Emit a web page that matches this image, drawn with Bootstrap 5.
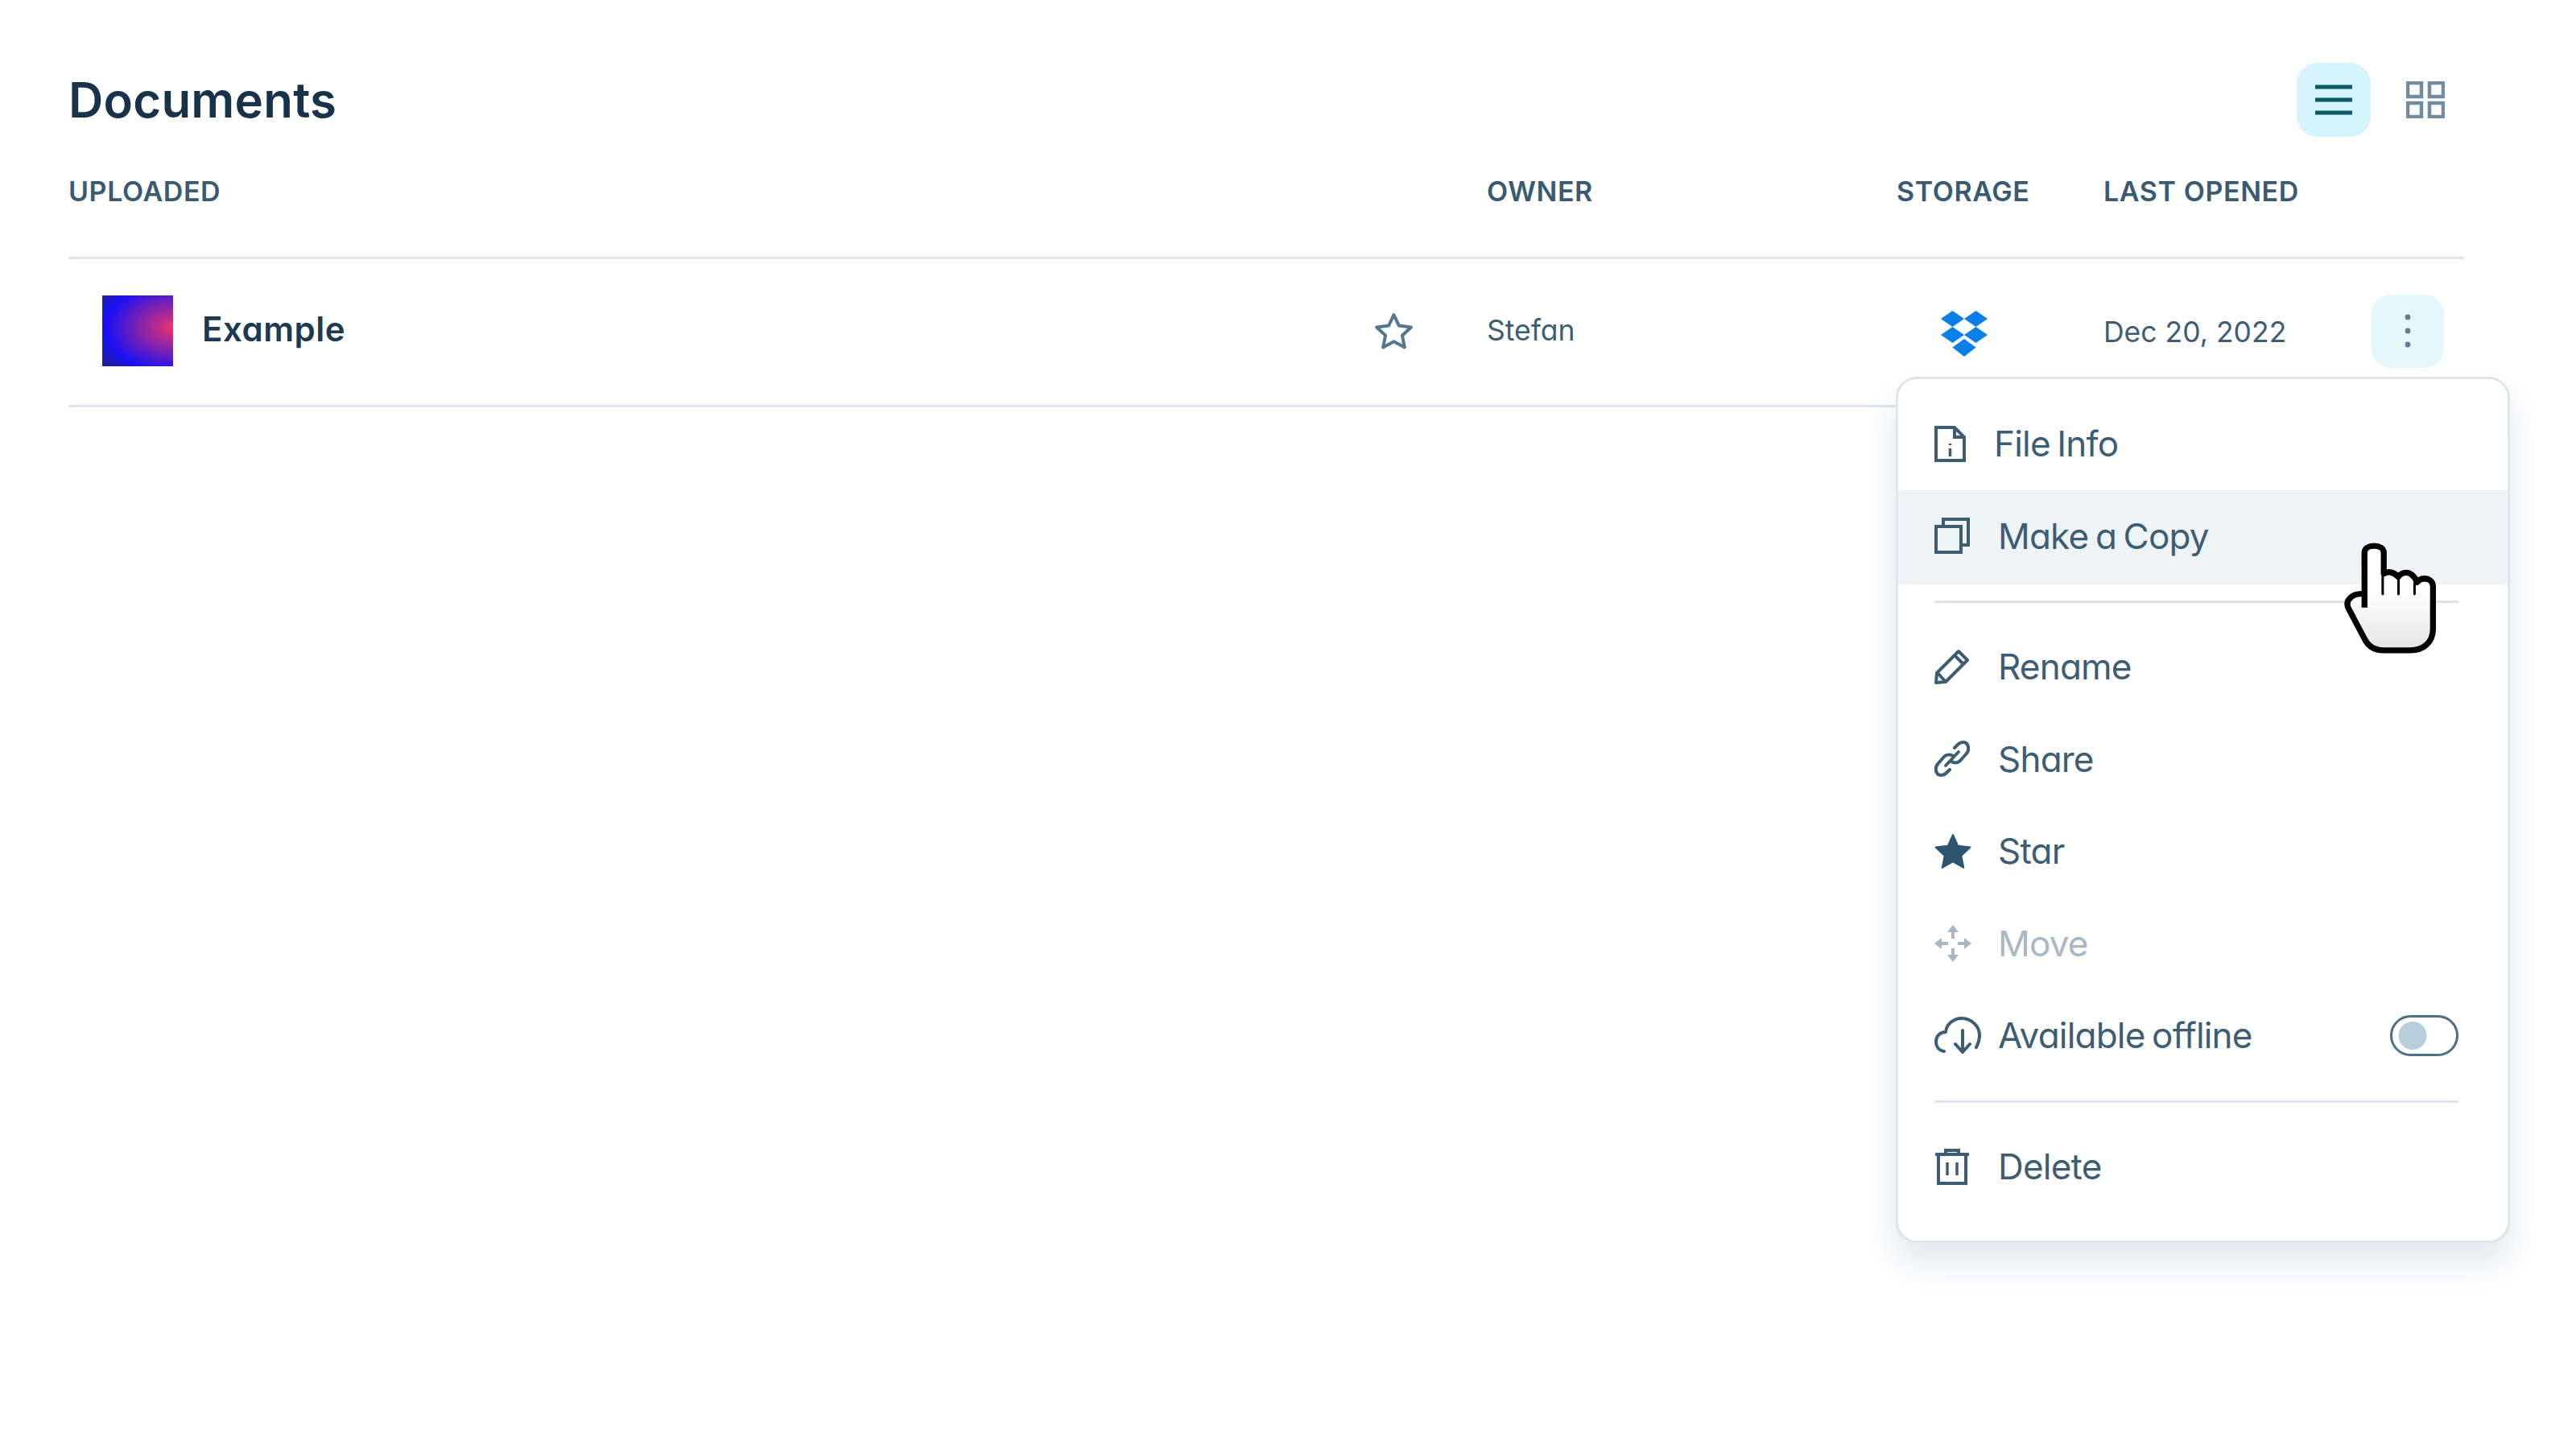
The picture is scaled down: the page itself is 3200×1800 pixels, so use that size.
<!doctype html>
<html lang="en">
<head>
<meta charset="utf-8">
<title>Documents</title>
<link href="https://cdn.jsdelivr.net/npm/bootstrap@5.3.0/dist/css/bootstrap.min.css" rel="stylesheet">
<style>
body{background:#fff;font-family:"Inter","Lato","Noto Sans",sans-serif;font-feature-settings:"cv11" 1;color:#35556b}
.doc-page{padding:78px 139px 0 85px;min-height:1800px}
.doc-title{font-size:60px;font-weight:600;color:#183349;margin:0;letter-spacing:.2px}
.view-gap{gap:22px;margin-right:2px}
.view-btn{width:92px;height:92px;border:0;border-radius:26px;background:transparent;padding:0}
.view-btn.is-on{background:#d4f3fb}
.col-grid{display:grid;grid-template-columns:1762px 509px 257px 333px 115px;align-items:center}
.head-row{height:152px;border-bottom:3px solid #dde6ee;font-size:34px;font-weight:600;color:#3a5a72;letter-spacing:.6px}
.head-row>div{padding-bottom:14px}
.body-row{height:184px;padding-bottom:3px;border-bottom:3px solid #dde6ee;position:relative;font-size:35.5px;color:#3e5d73}
.name-cell{padding:0 91px 0 42px}
.thumb{width:88px;height:88px;background:radial-gradient(ellipse 105% 70% at 100% 45%,#f73365 0,#c02c88 18%,#8a24a8 42%,#5a1cc8 62%,#1a10f5 90%,#1c2588 122%)}
.doc-name{font-size:42px;font-weight:600;color:#1d3a50;margin-left:36px;letter-spacing:.5px;padding-bottom:5px}
.date-cell{padding-top:3px}
.storage-logo{display:block;margin:6px 0 0 55px}
.more-btn{width:90px;height:91px;border:0;border-radius:24px;background:#e6f7fc;padding:0}
.file-menu{position:absolute;top:146px;right:-57px;left:auto;width:763px;margin:0;padding:23px 0 35px;border:3px solid #dde6ee;border-radius:26px;box-shadow:0 24px 44px rgba(60,100,130,.16);font-size:44px;color:#3e5d73;letter-spacing:-.8px;word-spacing:-3px;z-index:5}
.file-menu .dropdown-item{height:114.5px;padding:0 45px;display:flex;align-items:center;color:#3e5d73}
.file-menu .dropdown-item.is-hover{height:117px;padding-bottom:2.5px;background:#eef3f6}
.file-menu .dropdown-item.is-off{color:#a9b8c2}
.file-menu .dropdown-divider{margin:23px 61px 22px 45px;border-top:3px solid #dde6ee;opacity:1}
.file-menu .dropdown-item.is-hover + .dropdown-divider{margin-top:20.5px}
.ico-slot{width:79px;flex:none;display:flex;align-items:center}
.ico-slot.tight{width:74px}
.file-menu .form-check-input{width:85px;height:51px;margin:0;float:none;border:3px solid #4f6f84;background-color:#fff;background-image:radial-gradient(circle at 25px center,#b8cedb 17px,transparent 18px);background-position:0 0;background-size:auto;box-shadow:none}
.file-menu .form-switch{padding:0;margin:0 16px 0 auto;min-height:0;display:flex}
.hand{position:absolute;left:553px;top:202px;width:117px;height:140px;pointer-events:none}
</style>
</head>
<body>
<main class="doc-page">
  <header class="d-flex align-items-center justify-content-between">
    <h1 class="doc-title">Documents</h1>
    <div class="d-flex view-gap">
      <button class="view-btn is-on d-flex align-items-center justify-content-center" aria-label="List view">
        <svg width="46" height="38" viewBox="0 0 46 38"><path d="M0 3h46M0 19h46M0 35h46" stroke="#0d5868" stroke-width="5"/></svg>
      </button>
      <button class="view-btn d-flex align-items-center justify-content-center" aria-label="Grid view">
        <svg width="48" height="46" viewBox="0 0 48 46" fill="none" stroke="#6f8ca0" stroke-width="4.500"><rect x="2" y="2" width="17" height="17"/><rect x="29" y="2" width="17" height="17"/><rect x="2" y="27" width="17" height="17"/><rect x="29" y="27" width="17" height="17"/></svg>
      </button>
    </div>
  </header>
  <div class="col-grid head-row">
    <div>UPLOADED</div><div>OWNER</div><div>STORAGE</div><div>LAST OPENED</div><div></div>
  </div>
  <div class="col-grid body-row">
    <div class="name-cell d-flex align-items-center">
      <div class="thumb"></div>
      <div class="doc-name">Example</div>
      <svg class="ms-auto" width="49" height="47" viewBox="0 0 49 47"><path d="M24.5 3l6.4 13.6 15 1.900-11 10.200 2.900 14.800-13.300-7.300-13.300 7.300 2.900-14.800-11-10.200 15-1.900z" fill="none" stroke="#54778f" stroke-width="4" stroke-linejoin="round"/></svg>
    </div>
    <div>Stefan</div>
    <div>
      <svg class="storage-logo" width="58" height="57" viewBox="0 0 58 57" fill="#0a7fe8"><path d="M14.5 0 29 10 14.5 20 0 10zM43.5 0 58 10 43.5 20 29 10zM14.5 20 29 30 14.5 40 0 30zM43.500 20 58 30 43.5 40 29 30zM29 35 43.500 45.500 29 57 14.500 45.500z"/></svg>
    </div>
    <div class="date-cell">Dec 20, 2022</div>
    <div>
      <button class="more-btn d-flex flex-column align-items-center justify-content-center" aria-label="More">
        <svg width="8" height="42" viewBox="0 0 8 42" fill="#5f7f95"><circle cx="4" cy="4" r="3.4"/><circle cx="4" cy="21" r="3.4"/><circle cx="4" cy="38" r="3.4"/></svg>
      </button>
    </div>
    <div class="dropdown-menu show file-menu">
      <a class="dropdown-item" href="#"><span class="ico-slot tight"><svg width="39" height="45" viewBox="0 0 39 45" fill="none" stroke="#3e5d73" stroke-width="4"><path d="M2 2h23l12 12v29H2zM25 2v12h12"/><path d="M19.500 22v2M19.500 28v10" stroke-width="3.500"/></svg></span>File Info</a>
      <a class="dropdown-item is-hover" href="#"><span class="ico-slot"><svg width="44" height="45" viewBox="0 0 44 45" fill="none" stroke="#3e5d73" stroke-width="4"><rect x="2" y="11" width="31" height="32"/><path d="M11 11V2h31v32h-9"/></svg></span>Make a Copy</a>
      <hr class="dropdown-divider">
      <a class="dropdown-item" href="#"><span class="ico-slot"><svg width="44" height="44" viewBox="0 0 44 44" fill="none" stroke="#3e5d73" stroke-width="4" stroke-linejoin="round"><path d="M2 42l1-12L30 3l11 11-27 27zM4 30l10 11M25 8l11 11"/></svg></span>Rename</a>
      <a class="dropdown-item" href="#"><span class="ico-slot"><svg width="44" height="45" viewBox="0 0 44 45" fill="none" stroke="#3e5d73" stroke-width="4" stroke-linecap="round"><path d="M25 9l4-4c4-4 10-4 12 0s2 8-2 12l-7 8c-3 3-8 3-11 1"/><path d="M19 36l-4 4c-4 4-10 4-12 0s-2-8 2-12l7-8c3-3 8-3 11-1"/><path d="M14 31l16-17"/></svg></span>Share</a>
      <a class="dropdown-item" href="#"><span class="ico-slot"><svg width="46" height="45" viewBox="0 0 46 45"><path d="M23 2l6.300 13.800 15.200 1.800-11.200 10.300 3 15.100L23 35.500 9.700 43l3-15.100L1.500 17.600l15.200-1.800z" fill="#2f5470" stroke="#2f5470" stroke-width="2" stroke-linejoin="round"/></svg></span>Star</a>
      <a class="dropdown-item is-off" href="#"><span class="ico-slot"><svg width="46" height="46" viewBox="0 0 46 46" fill="#a9b8c2"><path d="M23 0l7 9H16zM23 46l-7-9h14zM0 23l9-7v14zM46 23l-9 7V16z"/><path d="M23 9v8M23 29v8M9 23h8M29 23h8" stroke="#a9b8c2" stroke-width="4"/></svg></span>Move</a>
      <a class="dropdown-item" href="#"><span class="ico-slot"><svg width="60" height="46" viewBox="0 0 60 46" fill="none" stroke="#3e5d73" stroke-width="4" stroke-linecap="round" stroke-linejoin="round"><path d="M12 43C5 42 2 37 2 31c0-7 5-12 12-12 1-10 10-17 20-17 12 0 22 10 22 21 0 6-2 11-4 15"/><path d="M35 17v26M26 34l9 10 9-10"/></svg></span>Available offline
        <span class="form-check form-switch"><input class="form-check-input" type="checkbox" role="switch" aria-label="Available offline"></span></a>
      <hr class="dropdown-divider">
      <a class="dropdown-item" href="#"><span class="ico-slot"><svg width="44" height="46" viewBox="0 0 44 46" fill="none" stroke="#3e5d73" stroke-width="4"><path d="M1 8h42M5 8v36h34V8M14 8V3h16v5"/><path d="M16 18v16M28 18v16" stroke-width="3.500"/></svg></span>Delete</a>
      <svg class="hand" viewBox="150 95 352 420" aria-hidden="true">
        <defs><linearGradient id="handfill" x1="0" y1="0" x2="0" y2="1"><stop offset=".45" stop-color="#fff"/><stop offset="1" stop-color="#e4e4e4"/></linearGradient></defs>
        <path d="M229 290C214 288 190 290 176 304 163 316 162 330 170 345L228 455C240 480 262 500 300 500H400C450 500 485 470 485 420V262C485 242 470 232 452 232 440 232 432 238 425 246 418 225 402 210 385 210 372 210 362 216 355 226 345 214 332 208 320 208 312 208 306 210 301 214V135C301 118 285 110 265 110 245 110 229 118 229 135V340" fill="url(#handfill)" stroke="#000" stroke-width="22" stroke-linejoin="round"/>
        <path d="M297 225V290M356 228V290M416 250V290" fill="none" stroke="#000" stroke-width="9" stroke-linecap="round"/>
      </svg>
    </div>
  </div>
</main>
<script src="https://cdn.jsdelivr.net/npm/bootstrap@5.3.0/dist/js/bootstrap.bundle.min.js"></script>
</body>
</html>
